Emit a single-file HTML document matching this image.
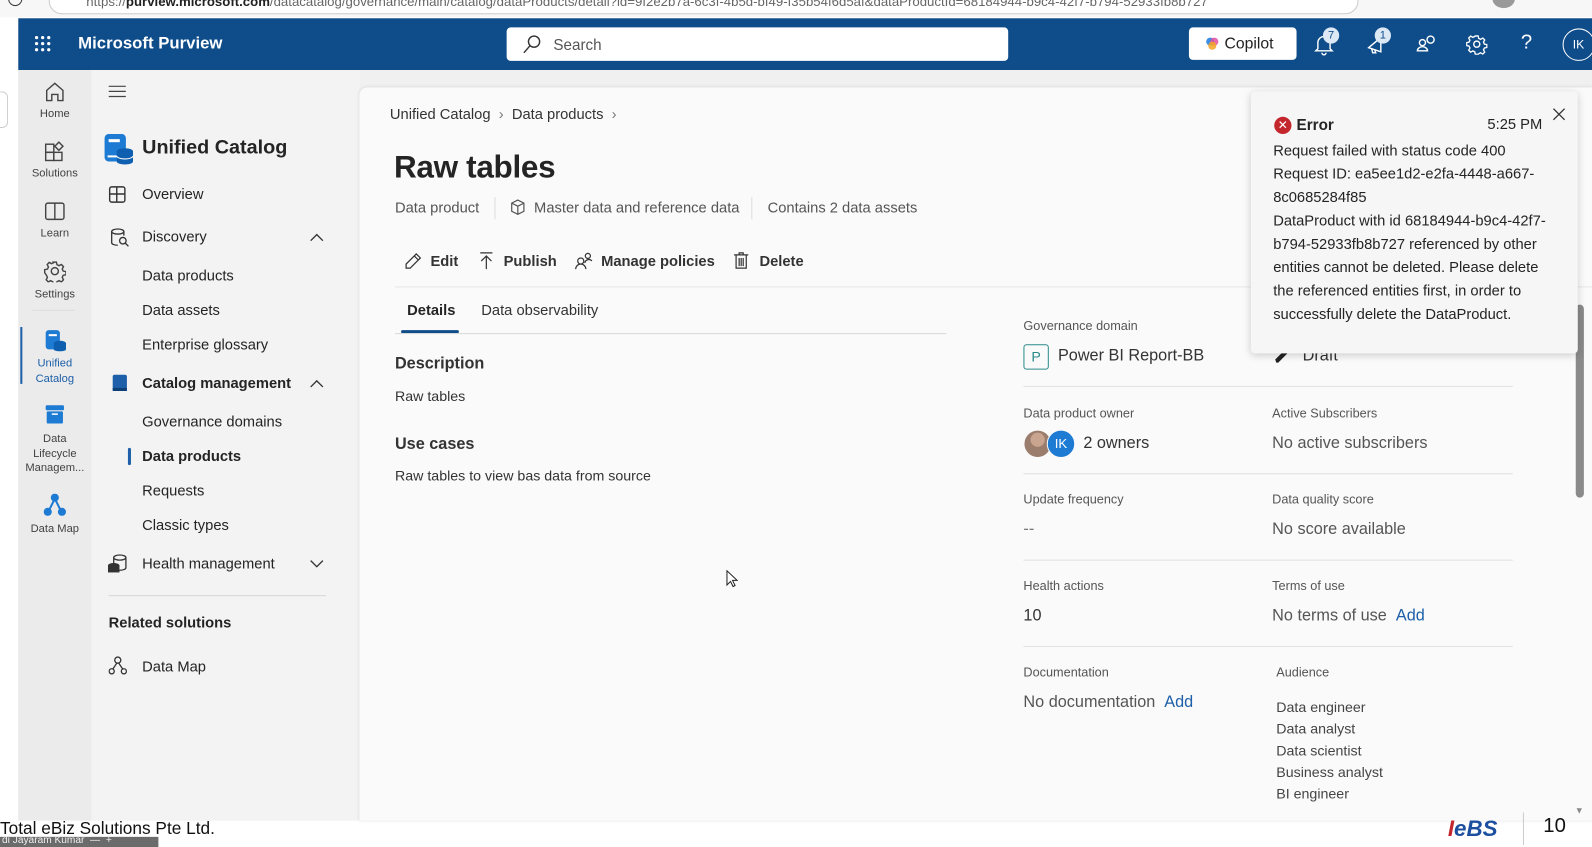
<!DOCTYPE html>
<html><head><meta charset="utf-8">
<style>
*{box-sizing:border-box;margin:0;padding:0}
html,body{width:1592px;height:845px;overflow:hidden;background:#fff;font-family:"Liberation Sans",sans-serif;color:#242424}
#w{position:absolute;left:0;top:0;width:1568px;height:832px;transform:scale(1.01531,1.0156);transform-origin:0 0;background:#fff}
.a{position:absolute;white-space:nowrap}
.hdr{position:absolute;left:18px;top:18px;width:1550px;height:51px;background:#0f4c8a}
.app{position:absolute;left:18px;top:69px;width:1550px;height:739px;background:#f0f0f0}
.rail{position:absolute;left:18px;top:69px;width:72px;height:739px;background:#ebebeb}
.nav{position:absolute;left:90px;top:69px;width:264px;height:739px;background:#f3f3f3}
.card{position:absolute;left:354px;top:86px;width:1214px;height:722px;background:#fafafa;border-radius:8px 0 0 0;box-shadow:0 0 3px rgba(0,0,0,.1)}
.rl{font-size:11px;color:#424242;text-align:center;width:72px;left:18px;line-height:14.5px}
.ni{font-size:14.5px;color:#242424}
.lab{font-size:12.5px;color:#555}
.val{font-size:16px;color:#333}
.hr{position:absolute;height:1px;background:#e0e0e0}
.err div{font-size:14.5px;line-height:23px;color:#242424}
</style></head><body><div id="w">
<!-- browser bar -->
<div class="a" style="left:0;top:0;width:1568px;height:17px;background:#f7f7f7"></div>
<div class="a" style="left:48px;top:-12px;width:1290px;height:26px;border:1px solid #ccc;border-radius:14px;background:#fff"></div>
<div class="a" style="left:85px;top:-6px;font-size:13px;color:#666">https://<b style="color:#222">purview.microsoft.com</b>/datacatalog/governance/main/catalog/dataProducts/detail?id=9f2e2b7a-6c3f-4b5d-bf49-f35b54f6d5af&amp;dataProductId=68184944-b9c4-42f7-b794-52933fb8b727</div>
<div class="a" style="left:8px;top:-8px;width:14px;height:14px;border:1.5px solid #333;border-radius:50%"></div>
<div class="a" style="left:1470px;top:-10px;width:22px;height:18px;border-radius:50%;background:#999"></div>
<div class="a" style="left:0;top:90px;width:8px;height:36px;border:1px solid #ccc;border-left:none;border-radius:0 6px 6px 0;background:#fff"></div>

<div class="hdr"></div>
<svg class="a" style="left:34px;top:35px" width="16" height="16" fill="#fff"><circle cx="2" cy="2" r="1.6"/><circle cx="8" cy="2" r="1.6"/><circle cx="14" cy="2" r="1.6"/><circle cx="2" cy="8" r="1.6"/><circle cx="8" cy="8" r="1.6"/><circle cx="14" cy="8" r="1.6"/><circle cx="2" cy="14" r="1.6"/><circle cx="8" cy="14" r="1.6"/><circle cx="14" cy="14" r="1.6"/></svg>
<div class="a" style="left:77px;top:34px;font-size:16.5px;font-weight:bold;color:#fff">Microsoft Purview</div>
<div class="a" style="left:499px;top:27px;width:494px;height:33px;background:#fff;border-radius:4px"></div>
<svg class="a" style="left:514px;top:34px" width="20" height="20" fill="none" stroke="#333" stroke-width="1.4"><circle cx="12" cy="7" r="5.5"/><path d="M8 11L2 18"/></svg>
<div class="a" style="left:545px;top:36px;font-size:15px;color:#555">Search</div>
<div class="a" style="left:1171px;top:27px;width:106px;height:32px;background:#fff;border-radius:4px"></div>
<svg class="a" style="left:1187px;top:36px" width="14" height="14"><circle cx="5" cy="5" r="4" fill="#3a8ee6"/><circle cx="9" cy="5" r="4" fill="#e34fa0" opacity=".85"/><circle cx="7" cy="9" r="4" fill="#f5a623" opacity=".85"/></svg>
<div class="a" style="left:1206px;top:35px;font-size:15.5px;color:#222">Copilot</div>
<svg class="a" style="left:1294px;top:33px" width="20" height="22" fill="none" stroke="#fff" stroke-width="1.4"><path d="M4 15V9a6 6 0 0 1 12 0v6l2 2H2z M8 19a2 2 0 0 0 4 0"/></svg>
<div class="a" style="left:1303px;top:27px;width:16px;height:16px;border-radius:50%;background:#dde8f5;color:#0f4c8a;font-size:11px;text-align:center;line-height:16px">7</div>
<svg class="a" style="left:1345px;top:34px" width="20" height="20" fill="none" stroke="#fff" stroke-width="1.4"><path d="M3 13l12-10v14z M6 14l1 4h3l-1-3"/></svg>
<div class="a" style="left:1354px;top:27px;width:16px;height:16px;border-radius:50%;background:#dde8f5;color:#0f4c8a;font-size:11px;text-align:center;line-height:16px">1</div>
<svg class="a" style="left:1395px;top:34px" width="20" height="20" fill="none" stroke="#fff" stroke-width="1.4"><circle cx="6" cy="8" r="3"/><path d="M1 16a5 4 0 0 1 10 0z"/><circle cx="14" cy="5" r="3.5"/></svg>
<svg class="a" style="left:1444px;top:33px" width="21" height="21" fill="none" stroke="#fff" stroke-width="1.4"><circle cx="10.5" cy="10.5" r="3"/><path d="M9 2h3l.5 2.5 2 1 2.3-1.3 2 2-1.3 2.3 1 2 2.5.5v3l-2.5.5-1 2 1.3 2.3-2 2-2.3-1.3-2 1L12 21H9l-.5-2.5-2-1-2.3 1.3-2-2 1.3-2.3-1-2L0 12V9l2.5-.5 1-2-1.3-2.3 2-2 2.3 1.3 2-1z" transform="scale(.95) translate(.5 .5)"/></svg>
<div class="a" style="left:1498px;top:31px;font-size:20px;color:#fff">?</div>
<div class="a" style="left:1539px;top:28px;width:32px;height:32px;border-radius:50%;border:1.3px solid #fff;color:#fff;font-size:12px;line-height:30px;padding-left:9px">IK</div>

<div class="app"></div>
<div class="rail"></div>
<div class="nav"></div>
<div class="card"></div>

<!-- rail -->
<svg class="a" style="left:43px;top:79px" width="22" height="22" fill="none" stroke="#444" stroke-width="1.4"><path d="M3 10L11 3l8 7v10h-5v-6H8v6H3z"/></svg>
<div class="a rl" style="top:105px">Home</div>
<svg class="a" style="left:43px;top:138px" width="22" height="22" fill="none" stroke="#444" stroke-width="1.4"><rect x="2" y="4" width="8" height="8"/><rect x="2" y="12" width="8" height="8"/><rect x="10" y="12" width="8" height="8"/><path d="M15 2l4 4-4 4-4-4z"/></svg>
<div class="a rl" style="top:164px">Solutions</div>
<svg class="a" style="left:43px;top:197px" width="22" height="22" fill="none" stroke="#444" stroke-width="1.4"><rect x="2" y="3" width="18" height="16" rx="2"/><path d="M11 3v16"/></svg>
<div class="a rl" style="top:223px">Learn</div>
<svg class="a" style="left:43px;top:256px" width="22" height="22" fill="none" stroke="#444" stroke-width="1.4"><circle cx="11" cy="11" r="3.5"/><path d="M9.5 2h3l.6 2.6 2 1 2.4-1.2 2 2.1-1.2 2.4.9 2 2.8.6v3l-2.8.6-.9 2 1.2 2.4-2 2.1-2.4-1.2-2 1-.6 2.6h-3l-.6-2.6-2-1-2.4 1.2-2-2.1 1.2-2.4-.9-2L1 12.5v-3l2.8-.6.9-2-1.2-2.4 2-2.1 2.4 1.2 2-1z"/></svg>
<div class="a rl" style="top:283px">Settings</div>
<div class="hr" style="left:32px;top:305px;width:42px;background:#ddd"></div>
<div class="a" style="left:20px;top:322px;width:2px;height:56px;background:#1d5fa8"></div>
<svg class="a" style="left:44px;top:324px" width="22" height="22"><rect x="1" y="1" width="14" height="19" rx="3" fill="#1e7bd4"/><rect x="4" y="5" width="8" height="2" fill="#fff"/><ellipse cx="15" cy="14" rx="6" ry="2.5" fill="#0f5fb0"/><rect x="9" y="14" width="12" height="6" fill="#0f5fb0"/><ellipse cx="15" cy="20" rx="6" ry="2" fill="#0f5fb0"/></svg>
<div class="a rl" style="top:351px;color:#1d5fa8">Unified<br>Catalog</div>
<svg class="a" style="left:44px;top:398px" width="20" height="22"><rect x="1" y="1" width="18" height="5" rx="1" fill="#1e7bd4"/><rect x="2" y="7" width="16" height="12" rx="1" fill="#1e7bd4"/><rect x="7" y="9" width="6" height="1.5" fill="#fff"/></svg>
<div class="a rl" style="top:425px">Data<br>Lifecycle<br>Managem...</div>
<svg class="a" style="left:43px;top:486px" width="22" height="22" fill="#1e7bd4" stroke="#1e7bd4" stroke-width="2"><path d="M11 5L5 17M11 5l6 12" fill="none"/><circle cx="11" cy="4" r="3"/><circle cx="4" cy="18" r="3"/><circle cx="18" cy="18" r="3"/></svg>
<div class="a rl" style="top:514px">Data Map</div>

<!-- nav -->
<svg class="a" style="left:107px;top:84px" width="17" height="12" stroke="#444" stroke-width="1.2"><path d="M0 1h17M0 6h17M0 11h17"/></svg>
<svg class="a" style="left:102px;top:131px" width="30" height="32"><rect x="1" y="1" width="21" height="27" rx="4" fill="#1e7bd4"/><rect x="5" y="6" width="11" height="3" fill="#fff"/><rect x="4" y="22" width="9" height="2" fill="#fff"/><ellipse cx="21" cy="18" rx="8" ry="3" fill="#0f5fb0"/><rect x="13" y="18" width="16" height="10" fill="#0f5fb0"/><ellipse cx="21" cy="28" rx="8" ry="3" fill="#0f5fb0"/><path d="M13 22.5a8 3 0 0 0 16 0" stroke="#fff" fill="none" stroke-width="1"/></svg>
<div class="a" style="left:140px;top:134px;font-size:19.5px;font-weight:bold;color:#242424">Unified Catalog</div>
<svg class="a" style="left:107px;top:183px" width="17" height="17" fill="none" stroke="#333" stroke-width="1.4"><rect x="1" y="1" width="15" height="15" rx="2"/><path d="M1 8h15M8 1v15"/></svg>
<div class="a ni" style="left:140px;top:184px">Overview</div>
<svg class="a" style="left:109px;top:224px" width="20" height="20" fill="none" stroke="#333" stroke-width="1.3"><ellipse cx="7" cy="4" rx="6" ry="2.5"/><path d="M1 4v11c0 1.5 3 2.5 6 2.5M13 4v4"/><circle cx="12" cy="13" r="3.2"/><path d="M14.5 15.5l3 3"/></svg>
<div class="a ni" style="left:140px;top:226px">Discovery</div>
<svg class="a" style="left:305px;top:229px" width="14" height="9" fill="none" stroke="#333" stroke-width="1.3"><path d="M1 8l6-6 6 6"/></svg>
<div class="a ni" style="left:140px;top:264px">Data products</div>
<div class="a ni" style="left:140px;top:298px">Data assets</div>
<div class="a ni" style="left:140px;top:332px">Enterprise glossary</div>
<svg class="a" style="left:110px;top:368px" width="16" height="18"><rect x="1" y="1" width="14" height="16" rx="2" fill="#1d5fa8"/><rect x="1" y="14" width="14" height="3" fill="#0d3f77"/></svg>
<div class="a ni" style="left:140px;top:370px;font-weight:bold">Catalog management</div>
<svg class="a" style="left:305px;top:373px" width="14" height="9" fill="none" stroke="#333" stroke-width="1.3"><path d="M1 8l6-6 6 6"/></svg>
<div class="a ni" style="left:140px;top:408px">Governance domains</div>
<div class="a" style="left:126px;top:441px;width:3px;height:17px;border-radius:2px;background:#1d5fa8"></div>
<div class="a ni" style="left:140px;top:442px;font-weight:bold">Data products</div>
<div class="a ni" style="left:140px;top:476px">Requests</div>
<div class="a ni" style="left:140px;top:510px">Classic types</div>
<svg class="a" style="left:106px;top:545px" width="20" height="20" fill="none" stroke="#333" stroke-width="1.3"><ellipse cx="12" cy="4" rx="6" ry="2.5"/><path d="M6 4v10c0 1.5 3 2.5 6 2.5s6-1 6-2.5V4"/><ellipse cx="6" cy="12" rx="5" ry="2" fill="#333"/><rect x="1" y="12" width="10" height="6" fill="#333"/></svg>
<div class="a ni" style="left:140px;top:548px">Health management</div>
<svg class="a" style="left:305px;top:551px" width="14" height="9" fill="none" stroke="#333" stroke-width="1.3"><path d="M1 1l6 6 6-6"/></svg>
<div class="hr" style="left:107px;top:586px;width:214px;background:#d6d6d6"></div>
<div class="a ni" style="left:107px;top:606px;font-weight:bold">Related solutions</div>
<svg class="a" style="left:107px;top:646px" width="18" height="20" fill="none" stroke="#333" stroke-width="1.3"><circle cx="9" cy="4" r="3"/><circle cx="3" cy="15" r="2.5"/><circle cx="15" cy="15" r="2.5"/><path d="M8 7l-4 6M10 7l4 6"/></svg>
<div class="a ni" style="left:140px;top:649px">Data Map</div>

<!-- content -->
<div class="a" style="left:384px;top:105px;font-size:14.5px;color:#333">Unified Catalog &nbsp;<span style="color:#777">›</span>&nbsp; Data products &nbsp;<span style="color:#777">›</span></div>
<div class="a" style="left:388px;top:147px;font-size:31px;font-weight:bold;color:#242424;letter-spacing:-.3px">Raw tables</div>
<div class="a" style="left:389px;top:197px;font-size:14.5px;color:#555">Data product</div>
<div class="a" style="left:487px;top:194px;width:1px;height:22px;background:#ddd"></div>
<svg class="a" style="left:502px;top:196px" width="16" height="16" fill="none" stroke="#555" stroke-width="1.2"><path d="M8 1l6 3v8l-6 3-6-3V4z M2 4l6 3 6-3M8 7v8"/></svg>
<div class="a" style="left:526px;top:197px;font-size:14.5px;color:#555">Master data and reference data</div>
<div class="a" style="left:740px;top:194px;width:1px;height:22px;background:#ddd"></div>
<div class="a" style="left:756px;top:197px;font-size:14.5px;color:#555">Contains 2 data assets</div>

<svg class="a" style="left:398px;top:248px" width="18" height="18" fill="none" stroke="#333" stroke-width="1.2"><path d="M12 2l4 4-10 10H2v-4z M10 4l4 4"/></svg>
<div class="a" style="left:424px;top:250px;font-size:14.5px;font-weight:bold;color:#333">Edit</div>
<svg class="a" style="left:472px;top:248px" width="14" height="18" fill="none" stroke="#333" stroke-width="1.2"><path d="M1 1h12M7 4v13M2 9l5-5 5 5"/></svg>
<div class="a" style="left:496px;top:250px;font-size:14.5px;font-weight:bold;color:#333">Publish</div>
<svg class="a" style="left:566px;top:248px" width="18" height="18" fill="none" stroke="#333" stroke-width="1.2"><circle cx="6" cy="9" r="3"/><path d="M1 17a5 5 0 0 1 10 0"/><circle cx="13" cy="4" r="2.5"/><path d="M10 11a4 4 0 0 1 7-2"/></svg>
<div class="a" style="left:592px;top:250px;font-size:14.5px;font-weight:bold;color:#333">Manage policies</div>
<svg class="a" style="left:722px;top:248px" width="16" height="18" fill="none" stroke="#333" stroke-width="1.2"><path d="M1 3h14M6 3V1h4v2M3 3v13h10V3M6 6v8M8 6v8M10 6v8"/></svg>
<div class="a" style="left:748px;top:250px;font-size:14.5px;font-weight:bold;color:#333">Delete</div>
<div class="hr" style="left:389px;top:282px;width:1179px;background:#e6e6e6"></div>

<div class="a" style="left:401px;top:298px;font-size:14.5px;font-weight:bold;color:#242424">Details</div>
<div class="a" style="left:395px;top:325px;width:57px;height:3px;border-radius:2px;background:#0f4c8a"></div>
<div class="a" style="left:474px;top:298px;font-size:14.5px;color:#333">Data observability</div>
<div class="hr" style="left:389px;top:328px;width:543px;background:#d8d8d8"></div>

<div class="a" style="left:389px;top:350px;font-size:16px;font-weight:bold;color:#333">Description</div>
<div class="a" style="left:389px;top:382px;font-size:14px;color:#333">Raw tables</div>
<div class="a" style="left:389px;top:429px;font-size:16px;font-weight:bold;color:#333">Use cases</div>
<div class="a" style="left:389px;top:460px;font-size:14px;color:#333">Raw tables to view bas data from source</div>
<svg class="a" style="left:715px;top:561px" width="12" height="18"><path d="M1 1v14l3.5-3.5 2.5 5 2-1-2.5-5H11z" fill="#fff" stroke="#222" stroke-width="1"/></svg>

<!-- right details -->
<div class="a lab" style="left:1008px;top:314px">Governance domain</div>
<div class="a" style="left:1008px;top:339px;width:25px;height:25px;border:1.3px solid #2a8a8a;border-radius:3px;color:#2a8a8a;font-size:14px;text-align:center;line-height:23px">P</div>
<div class="a val" style="left:1042px;top:342px">Power BI Report-BB</div>
<svg class="a" style="left:1254px;top:342px" width="16" height="16"><path d="M3 15l-1-3 9-9 3 3-9 9z" fill="#222"/></svg>
<div class="a val" style="left:1283px;top:342px">Draft</div>
<div class="hr" style="left:1008px;top:380px;width:482px"></div>
<div class="a lab" style="left:1008px;top:400px">Data product owner</div>
<div class="a lab" style="left:1253px;top:400px">Active Subscribers</div>
<div class="a" style="left:1009px;top:424px;width:26px;height:26px;border-radius:50%;background:#9a7d6c"></div>
<div class="a" style="left:1015px;top:426px;width:14px;height:14px;border-radius:50%;background:#c9a48e"></div>
<div class="a" style="left:1031px;top:423px;width:28px;height:28px;border-radius:50%;background:#1e7bd4;border:1.5px solid #fafafa;color:#fff;font-size:13px;line-height:25px;text-align:center">IK</div>
<div class="a val" style="left:1067px;top:428px">2 owners</div>
<div class="a val" style="left:1253px;top:428px;color:#555">No active subscribers</div>
<div class="hr" style="left:1008px;top:466px;width:482px"></div>
<div class="a lab" style="left:1008px;top:485px">Update frequency</div>
<div class="a lab" style="left:1253px;top:485px">Data quality score</div>
<div class="a val" style="left:1008px;top:513px;color:#777">--</div>
<div class="a val" style="left:1253px;top:513px;color:#555">No score available</div>
<div class="hr" style="left:1008px;top:551px;width:482px"></div>
<div class="a lab" style="left:1008px;top:570px">Health actions</div>
<div class="a lab" style="left:1253px;top:570px">Terms of use</div>
<div class="a val" style="left:1008px;top:598px">10</div>
<div class="a val" style="left:1253px;top:598px;color:#555">No terms of use &nbsp;<span style="color:#1d5fa8">Add</span></div>
<div class="hr" style="left:1008px;top:636px;width:482px"></div>
<div class="a lab" style="left:1008px;top:655px">Documentation</div>
<div class="a lab" style="left:1257px;top:655px">Audience</div>
<div class="a val" style="left:1008px;top:683px;color:#555">No documentation &nbsp;<span style="color:#1d5fa8">Add</span></div>
<div class="a" style="left:1257px;top:686px;font-size:14px;color:#444;line-height:21.3px">Data engineer<br>Data analyst<br>Data scientist<br>Business analyst<br>BI engineer</div>

<!-- scrollbar -->
<div class="a" style="left:1552px;top:300px;width:8px;height:190px;border-radius:4px;background:#8a8a8a"></div>
<div class="a" style="left:1551px;top:793px;font-size:9px;color:#888">▼</div>

<!-- error toast -->
<div class="a err" style="left:1232px;top:90px;width:322px;height:258px;background:#f6f6f6;border-radius:4px;box-shadow:0 2px 8px rgba(0,0,0,.18)">
<div class="a" style="left:23px;top:25px;width:17px;height:17px;border-radius:50%;background:#c4262e;color:#fff;font-size:12px;line-height:17px;text-align:center">✕</div>
<div class="a" style="left:45px;top:22px;font-weight:bold;font-size:15px">Error</div>
<div class="a" style="left:233px;top:22px;font-size:14.5px">5:25 PM</div>
<svg class="a" style="left:297px;top:16px" width="13" height="13" stroke="#333" stroke-width="1.3"><path d="M1 1l11 11M12 1L1 12"/></svg>
<div class="a" style="left:22px;top:48px;white-space:normal;width:290px;font-size:14.5px">Request failed with status code 400<br>Request ID: ea5ee1d2-e2fa-4448-a667-<br>8c0685284f85<br>DataProduct with id 68184944-b9c4-42f7-<br>b794-52933fb8b727 referenced by other<br>entities cannot be deleted. Please delete<br>the referenced entities first, in order to<br>successfully delete the DataProduct.</div>
</div>

<!-- footer -->
<div class="a" style="left:0;top:806px;font-size:17px;color:#111">Total eBiz Solutions Pte Ltd.</div>
<div class="a" style="left:0;top:824px;width:156px;height:10px;background:#6b6b6b"></div>
<div class="a" style="left:2px;top:822px;font-size:10px;color:#eee">di Jayaram Kumar &nbsp;— &nbsp;+</div>
<div class="a" style="left:1426px;top:803px;font-size:22px;font-weight:bold;font-style:italic;color:#c4262e">I<span style="color:#1d4fa0">eBS</span></div>
<div class="a" style="left:1500px;top:800px;width:1px;height:32px;background:#ccc"></div>
<div class="a" style="left:1520px;top:802px;font-size:20px;color:#111">10</div>
</div></body></html>
